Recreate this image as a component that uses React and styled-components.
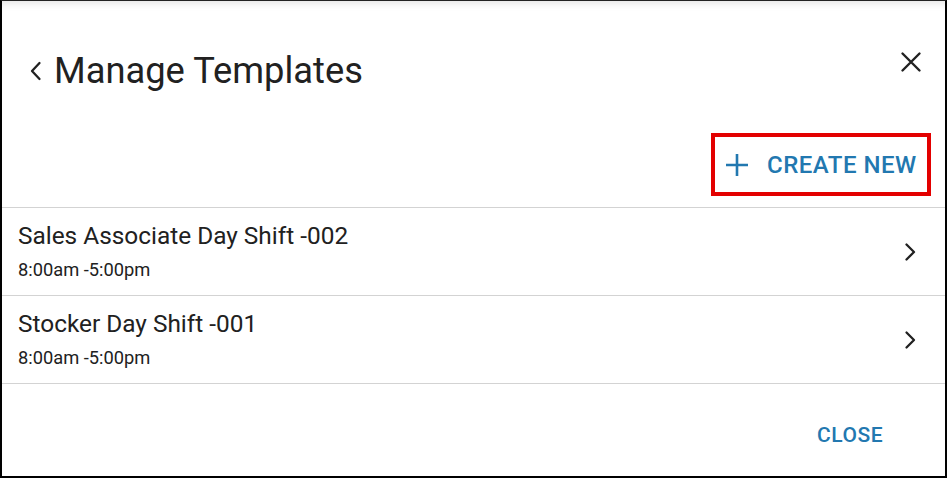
import React from "react";
import styled, { createGlobalStyle } from "styled-components";

const Global = createGlobalStyle`
  html, body { margin: 0; padding: 0; background: #fff; }
  body { font-family: Roboto, "Noto Sans", sans-serif; }
  * { box-sizing: border-box; }
`;

const Frame = styled.div`
  width: 947px;
  height: 478px;
  border-left: 2px solid #000;
  border-right: 2px solid #000;
  border-bottom: 2px solid #000;
  border-top: 1px solid #222;
  box-shadow: inset 0 8px 8px -6px rgba(0, 0, 0, 0.12);
  display: flex;
  flex-direction: column;
  background: #fff;
`;

const Header = styled.div`
  height: 119px;
  flex-shrink: 0;
  display: flex;
  align-items: flex-start;
  padding: 49px 22px 0 22px;
  justify-content: space-between;
`;

const TitleGroup = styled.div`
  display: flex;
  align-items: center;
  gap: 6px;
`;

const Title = styled.h1`
  margin: 0;
  font-size: 36.3px;
  line-height: 42px;
  font-weight: 400;
  color: #212121;
`;

const IconButton = styled.button`
  border: 0;
  background: none;
  padding: 0;
  display: flex;
  align-items: center;
  justify-content: center;
  color: #212121;
  cursor: pointer;
`;

const ActionRow = styled.div`
  height: 88px;
  flex-shrink: 0;
  display: flex;
  align-items: flex-start;
  justify-content: flex-end;
  padding: 13px 14px 0 0;
  border-bottom: 1px solid #d3d3d3;
`;

const Highlight = styled.div`
  border: 4px solid #e30000;
  width: 220px;
  height: 63px;
  display: flex;
  align-items: center;
`;

const TextButton = styled.button`
  border: 0;
  background: none;
  display: flex;
  align-items: center;
  gap: ${(p) => p.$gap || 0}px;
  color: #2278b0;
  font-family: Roboto, sans-serif;
  font-weight: 500;
  font-size: ${(p) => p.$size || 21}px;
  letter-spacing: 0.5px;
  text-transform: uppercase;
  padding: 0 0 0 ${(p) => p.$pad || 0}px;
  cursor: pointer;
`;

const List = styled.div`
  display: flex;
  flex-direction: column;
`;

const Row = styled.div`
  height: 88px;
  display: flex;
  align-items: center;
  justify-content: space-between;
  padding: 0 24px 0 16px;
  border-bottom: 1px solid #d3d3d3;
`;

const RowText = styled.div`
  display: flex;
  flex-direction: column;
  gap: 9px;
`;

const RowTitle = styled.div`
  font-size: 24.4px;
  color: #212121;
  line-height: 28px;
`;

const RowSub = styled.div`
  font-size: 18.3px;
  color: #212121;
  line-height: 22px;
`;

const Footer = styled.div`
  flex: 1;
  display: flex;
  align-items: center;
  justify-content: flex-end;
  padding: 10px 62px 0 0;
`;

const ChevronLeft = () => (
  <svg width="24" height="24" viewBox="0 0 24 24" fill="none" stroke="#212121" strokeWidth="2.3" strokeLinecap="round" strokeLinejoin="round">
    <path d="M15.5 4L8 12l7.5 8" />
  </svg>
);

const ChevronRight = () => (
  <svg width="24" height="24" viewBox="0 0 24 24" fill="none" stroke="#212121" strokeWidth="2.3" strokeLinecap="round" strokeLinejoin="round">
    <path d="M9.5 4.5L17 12l-7.5 7.5" />
  </svg>
);

const CloseIcon = () => (
  <svg width="24" height="24" viewBox="0 0 24 24" fill="none" stroke="#212121" strokeWidth="2.4" strokeLinecap="round">
    <path d="M3.5 3.5l17 17M20.5 3.5l-17 17" />
  </svg>
);

const PlusIcon = () => (
  <svg width="24" height="24" viewBox="0 0 24 24" fill="none" stroke="#2278b0" strokeWidth="2.6">
    <path d="M12 1v22M1 12h22" />
  </svg>
);

const templates = [
  { name: "Sales Associate Day Shift -002", time: "8:00am -5:00pm" },
  { name: "Stocker Day Shift -001", time: "8:00am -5:00pm" },
];

export default function App() {
  return (
    <>
      <Global />
      <Frame>
        <Header>
          <TitleGroup>
            <IconButton aria-label="Back">
              <ChevronLeft />
            </IconButton>
            <Title>Manage Templates</Title>
          </TitleGroup>
          <IconButton aria-label="Close">
            <CloseIcon />
          </IconButton>
        </Header>
        <ActionRow>
          <Highlight>
            <TextButton $gap={18} $pad={10} $size={24}>
              <PlusIcon />
              Create New
            </TextButton>
          </Highlight>
        </ActionRow>
        <List>
          {templates.map((t) => (
            <Row key={t.name}>
              <RowText>
                <RowTitle>{t.name}</RowTitle>
                <RowSub>{t.time}</RowSub>
              </RowText>
              <ChevronRight />
            </Row>
          ))}
        </List>
        <Footer>
          <TextButton $size={21}>Close</TextButton>
        </Footer>
      </Frame>
    </>
  );
}
